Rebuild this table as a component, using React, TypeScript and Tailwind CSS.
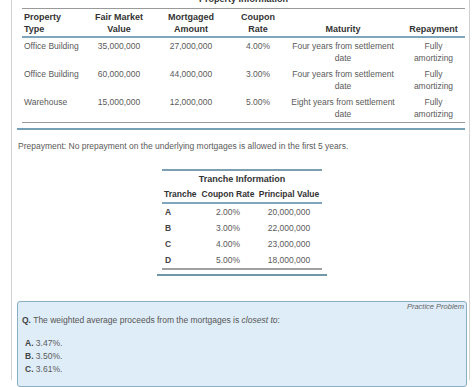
import React from "react";

const rows = [
  ["Office Building", "35,000,000", "27,000,000", "4.00%", "Four years from settlement date", "Fully amortizing"],
  ["Office Building", "60,000,000", "44,000,000", "3.00%", "Four years from settlement date", "Fully amortizing"],
  ["Warehouse", "15,000,000", "12,000,000", "5.00%", "Eight years from settlement date", "Fully amortizing"],
];

const tranches = [
  ["A", "2.00%", "20,000,000"],
  ["B", "3.00%", "22,000,000"],
  ["C", "4.00%", "23,000,000"],
  ["D", "5.00%", "18,000,000"],
];

const cols = "grid grid-cols-[66px_62px_82px_52px_118px_63px]";
const tcols = "grid grid-cols-[38px_56px_66px]";

export default function App() {
  return (
    <div className="h-[387px] w-[474px] overflow-hidden bg-white font-['Liberation_Sans',Arial,sans-serif] text-[8.5px] leading-[12px] text-[#5a5a5a]">
      <div className="ml-[11px] h-[387px] w-[459px] border-x border-[#d4d0d0] pl-[5px]">
        {/* Property information */}
        <div className="-mt-[7px] w-[448px] border-b-[2px] border-[#76a0b8] pb-[5px] pl-[5px]">
          <div className="w-[443px] text-center text-[9px] font-bold text-[#333]">Property Information</div>
          <div className="mt-[3px] w-[443px] border-t border-[#999]">
            <div className={`${cols} items-end border-b-[2px] border-[#7fa6bd] pb-[1px] pt-[2px] text-[9px] font-bold text-[#333]`}>
              <div className="pl-[2px]">Property<br />Type</div>
              <div className="text-center">Fair Market<br />Value</div>
              <div className="text-center">Mortgaged<br />Amount</div>
              <div className="text-center">Coupon<br />Rate</div>
              <div className="text-center">Maturity</div>
              <div className="text-center">Repayment</div>
            </div>
            {rows.map((r, i) => (
              <div key={i} className={`${cols} h-[28px] items-start py-[2px]`}>
                <div className="whitespace-nowrap pl-[2px]">{r[0]}</div>
                <div className="text-center">{r[1]}</div>
                <div className="text-center">{r[2]}</div>
                <div className="text-center">{r[3]}</div>
                <div className="px-[6px] text-center">{r[4]}</div>
                <div className="px-[8px] text-center">{r[5]}</div>
              </div>
            ))}
            <div className="border-t border-[#999]" />
          </div>
        </div>

        <div className="mt-[10px] pl-[1px]">
          Prepayment: No prepayment on the underlying mortgages is allowed in the first 5 years.
        </div>

        {/* Tranche information */}
        <div className="mt-[17px] ml-[140px] w-[170px] border-b-[2px] border-[#6f98a8] px-[5px] pb-[4px]">
          <div className="border-t-[2px] border-[#7c9fb2]">
            <div className="pt-[2px] text-center text-[9px] font-bold text-[#333]">Tranche Information</div>
            <div className={`${tcols} mt-[3px] border-b-[2px] border-[#7fa6bd] pb-[2px] text-[8.5px] font-bold text-[#333]`}>
              <div className="pl-[2px]">Tranche</div>
              <div className="text-center">Coupon Rate</div>
              <div className="text-center">Principal Value</div>
            </div>
            {tranches.map((t, i) => (
              <div key={i} className={`${tcols} h-[16px] items-center`}>
                <div className="pl-[3px] font-bold text-[#444]">{t[0]}</div>
                <div className="text-center">{t[1]}</div>
                <div className="text-center">{t[2]}</div>
              </div>
            ))}
            <div className="border-t-[2px] border-[#a0a0a0]" />
          </div>
        </div>

        {/* Question */}
        <div className="mt-[25px] h-[86px] w-[450px] rounded-[3px] border border-[#8aaec2] bg-[#dfedf8] pl-[4px] pr-[2px]">
          <div className="text-right text-[7.5px] italic leading-[9px] text-[#666]">Practice Problem</div>
          <div className="mt-[3px] text-[#555]">
            <span className="font-bold text-[#444]">Q.</span> The weighted average proceeds from the mortgages is <i>closest to</i>:
          </div>
          <div className="mt-[11px] pl-[3px] leading-[13px]">
            <div><span className="font-bold text-[#444]">A.</span> 3.47%.</div>
            <div><span className="font-bold text-[#444]">B.</span> 3.50%.</div>
            <div><span className="font-bold text-[#444]">C.</span> 3.61%.</div>
          </div>
        </div>
      </div>
    </div>
  );
}
